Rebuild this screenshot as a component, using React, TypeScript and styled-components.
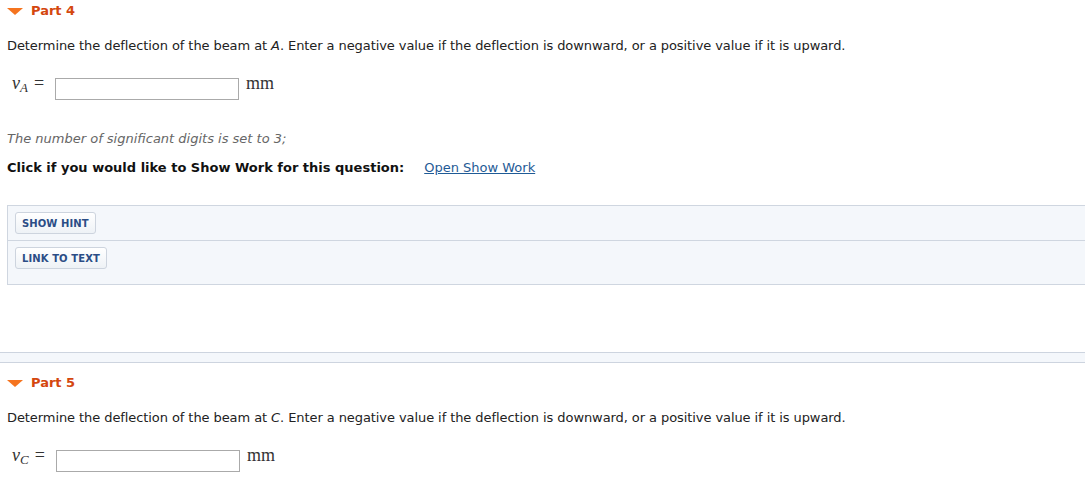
import React from "react";
import styled, {createGlobalStyle} from "styled-components";

// page base
const GlobalStyle = createGlobalStyle`
  body {
    margin: 0;
    background: #fff;
    font-family: 'DejaVu Sans', Verdana, sans-serif;
    font-size: 13px;
    color: #222;
  }
`;

const Page = styled.div`
  width: 1085px;
  overflow: hidden;
`;

const Section = styled.section`
  padding-left: 7px;
`;

// part header
const PartHeader = styled.div`
  display: flex;
  align-items: center;
  height: 20px;
  gap: 8px;
`;

const Arrow = styled.span`
  width: 0;
  height: 0;
  border-left: 8px solid transparent;
  border-right: 8px solid transparent;
  border-top: 7px solid #f5741f;
  margin-top: 2px;
`;

const PartTitle = styled.span`
  font-weight: bold;
  color: #d4470f;
  font-size: 13px;
`;

const Question = styled.p`
  margin: 18px 0 0;
  line-height: 16px;
  letter-spacing: -0.08px;
`;

const Em = styled.i`
  font-style: italic;
`;

// answer row
const AnswerRow = styled.div`
  display: flex;
  align-items: flex-start;
  margin-top: 24px;
  height: 22px;
`;

const Label = styled.span`
  flex: none;
  font-family: 'Liberation Serif', 'Times New Roman', serif;
  font-size: 18px;
  line-height: 20px;
  margin: -5px 0 0 5px;
  width: ${p => p.$w}px;
  color: #333;
  white-space: nowrap;
`;

const Var = styled.i`
  font-style: italic;
`;

const Sub = styled.sub`
  font-size: 13px;
  font-style: italic;
  vertical-align: -3px;
  line-height: 0;
`;

const Eq = styled.span`
  margin-left: 6px;
`;

const Field = styled.input`
  box-sizing: border-box;
  flex: none;
  width: 184px;
  height: 22px;
  border: 1px solid #aaa;
  margin: 0;
  padding: 0 4px;
  background: #fff;
`;

const Unit = styled.span`
  font-family: 'Liberation Serif', 'Times New Roman', serif;
  font-size: 18px;
  line-height: 20px;
  margin: -5px 0 0 7px;
  color: #333;
`;

const Note = styled.p`
  margin: 31px 0 0;
  line-height: 16px;
  font-style: italic;
  color: #666;
`;

const WorkLine = styled.p`
  margin: 13px 0 0;
  line-height: 16px;
  font-weight: bold;
  color: #111;
`;

const WorkLink = styled.a`
  font-weight: normal;
  color: #1f5b96;
  text-decoration: underline;
  margin-left: 20px;
`;

// hint panel
const HintPanel = styled.div`
  margin-top: 29px;
  width: 1100px;
  border: 1px solid #cfd6e0;
  background: #f4f7fb;
`;

const HintRow = styled.div`
  padding: 6px 7px ${p => p.$bottom}px;
  & + & {
    border-top: 1px solid #cfd6e0;
  }
`;

const HintButton = styled.button`
  box-sizing: border-box;
  height: 22px;
  padding: 0 6px;
  border: 1px solid #cdd4de;
  border-radius: 3px;
  background: linear-gradient(#ffffff, #eef2f6);
  font-family: 'DejaVu Sans', Verdana, sans-serif;
  font-weight: bold;
  font-size: 10px;
  color: #2b4d86;
  letter-spacing: 0.1px;
`;

const Band = styled.div`
  margin-top: 67px;
  height: 9px;
  border-top: 1px solid #cdd4df;
  border-bottom: 1px solid #cdd4df;
  background: #f4f7fb;
`;

const PartFive = styled(Section)`
  margin-top: 9px;
`;

type PartProps = {
  num: number;
  point: string;
  labelW: number;
};

function PartBlock({num, point, labelW}: PartProps) {
  return (
    <>
      <PartHeader>
        <Arrow/>
        <PartTitle>Part {num}</PartTitle>
      </PartHeader>
      <Question>
        Determine the deflection of the beam at <Em>{point}</Em>. Enter a negative value if the deflection is downward, or a positive value if it is upward.
      </Question>
      <AnswerRow>
        <Label $w={labelW}>
          <Var>v</Var><Sub>{point}</Sub><Eq>=</Eq>
        </Label>
        <Field type="text"/>
        <Unit>mm</Unit>
      </AnswerRow>
    </>
  );
}

export default function App() {
  return (
    <Page>
      <GlobalStyle/>
      <Section>
        <PartBlock num={4} point="A" labelW={43}/>
        <Note>The number of significant digits is set to 3;</Note>
        <WorkLine>
          Click if you would like to Show Work for this question:
          <WorkLink href="#">Open Show Work</WorkLink>
        </WorkLine>
        <HintPanel>
          <HintRow $bottom={6}>
            <HintButton>SHOW HINT</HintButton>
          </HintRow>
          <HintRow $bottom={15}>
            <HintButton>LINK TO TEXT</HintButton>
          </HintRow>
        </HintPanel>
      </Section>
      <Band/>
      <PartFive>
        <PartBlock num={5} point="C" labelW={44}/>
      </PartFive>
    </Page>
  );
}
